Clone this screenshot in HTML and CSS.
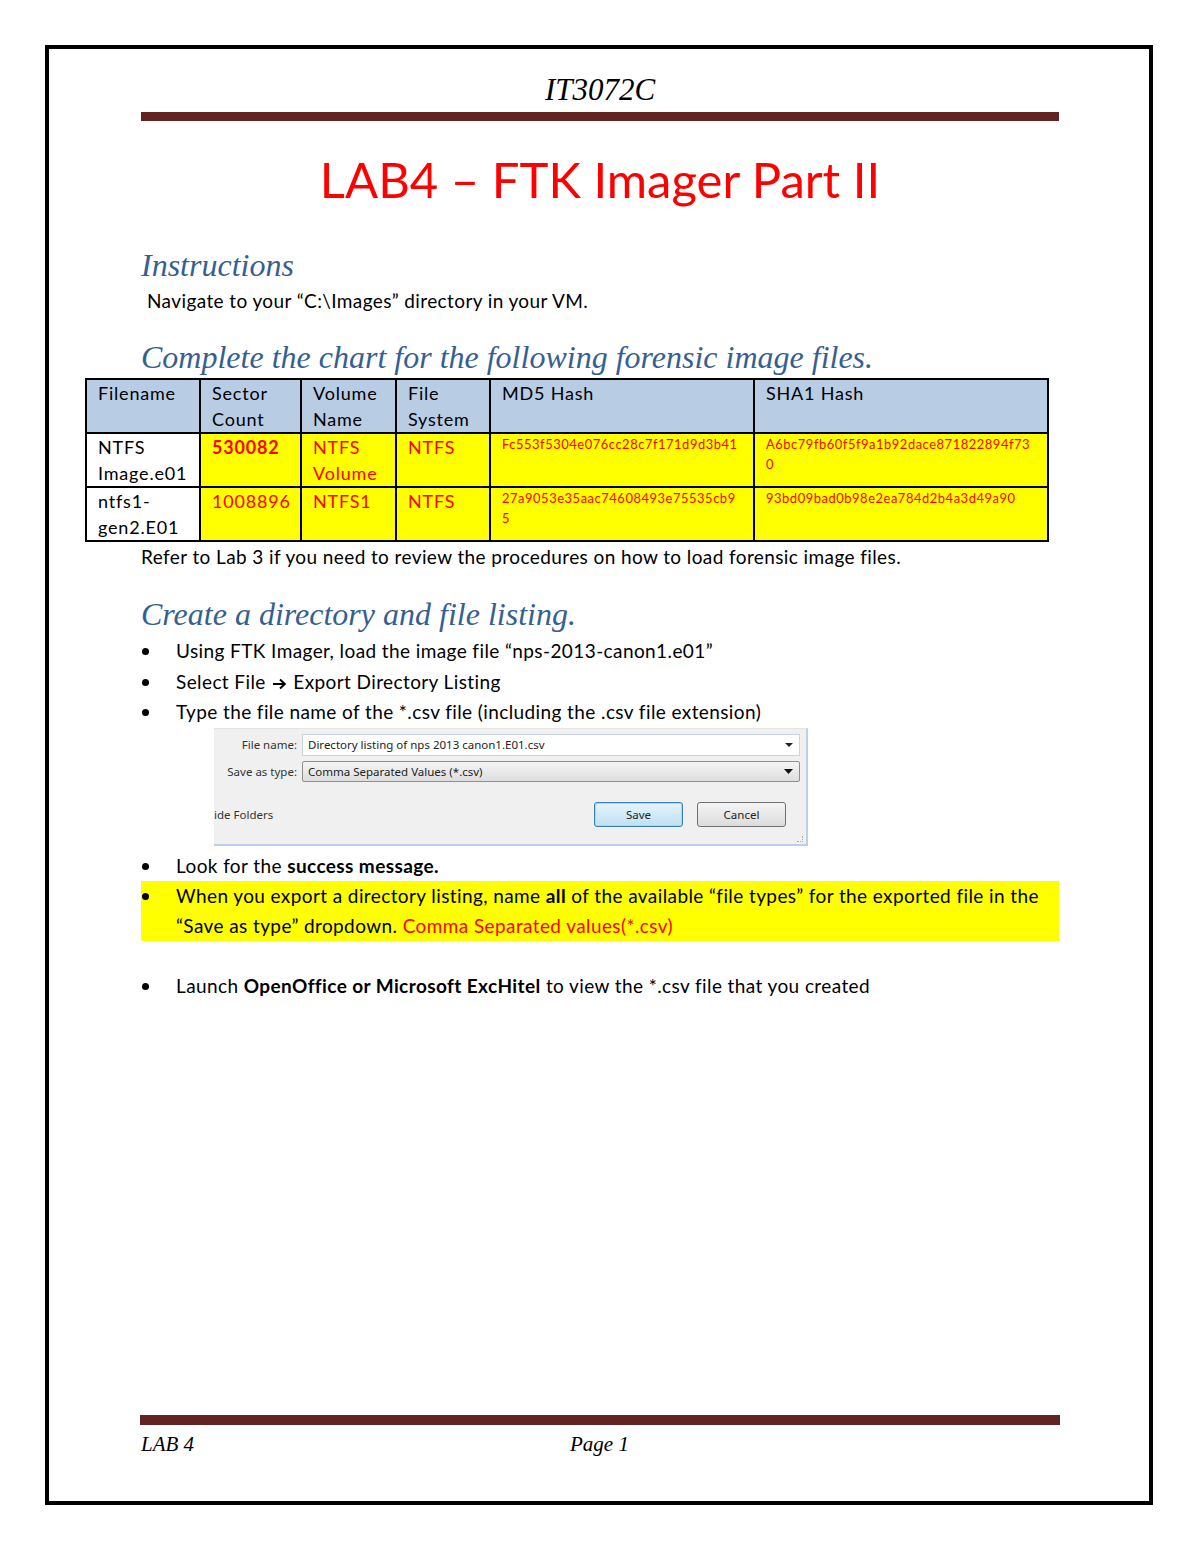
FILE: index.html
```html
<!DOCTYPE html>
<html>
<head>
    <title>LAB4 - FTK Imager Part II</title>
    <meta charset="UTF-8">
    <link rel="stylesheet" href="styles.css">
</head>
<body>
    <div class="page">
        <div class="header">IT3072C</div>
        <div class="rule"></div>
        <h1 class="title">LAB4 – FTK Imager Part II</h1>

        <h2 class="heading instr">Instructions</h2>
        <p class="text nav">Navigate to your “C:\Images” directory in your VM.</p>

        <h2 class="heading chart-title">Complete the chart for the following forensic image files.</h2>
        <table class="chart">
            <colgroup>
                <col style="width:114px">
                <col style="width:101px">
                <col style="width:95px">
                <col style="width:94px">
                <col style="width:264px">
                <col style="width:294px">
            </colgroup>
            <tr class="head">
                <th>Filename</th>
                <th>Sector Count</th>
                <th>Volume Name</th>
                <th>File System</th>
                <th>MD5 Hash</th>
                <th>SHA1 Hash</th>
            </tr>
            <tr>
                <td class="name">NTFS Image.e01</td>
                <td class="answer strong">530082</td>
                <td class="answer">NTFS Volume</td>
                <td class="answer">NTFS</td>
                <td class="hash">Fc553f5304e076cc28c7f171d9d3b41</td>
                <td class="hash">A6bc79fb60f5f9a1b92dace871822894f73<br>0</td>
            </tr>
            <tr>
                <td class="name">ntfs1-<br>gen2.E01</td>
                <td class="answer">1008896</td>
                <td class="answer">NTFS1</td>
                <td class="answer">NTFS</td>
                <td class="hash">27a9053e35aac74608493e75535cb9<br>5</td>
                <td class="hash">93bd09bad0b98e2ea784d2b4a3d49a90</td>
            </tr>
        </table>
        <p class="text refer">Refer to Lab 3 if you need to review the procedures on how to load forensic image files.</p>

        <h2 class="heading create">Create a directory and file listing.</h2>
        <ul class="bullets">
            <li>Using FTK Imager, load the image file “nps-2013-canon1.e01”</li>
            <li>Select File <svg class="arrow" width="15" height="12" viewBox="0 0 15 12"><path d="M1 6h11.5M8 1.5l4.8 4.5L8 10.5" fill="none" stroke="#000" stroke-width="2"/></svg> Export Directory Listing</li>
            <li>Type the file name of the *.csv file (including the .csv file extension)</li>
        </ul>

        <div class="dialog">
            <div class="field">
                <span class="label">File name:</span>
                <div class="input">Directory listing of nps 2013 canon1.E01.csv
                    <svg class="caret" width="8" height="4" viewBox="0 0 8 4"><path d="M0 0h8L4 4z" fill="#222"/></svg>
                </div>
            </div>
            <div class="field">
                <span class="label">Save as type:</span>
                <div class="input select">Comma Separated Values (*.csv)
                    <svg class="caret" width="9" height="5" viewBox="0 0 9 5"><path d="M0 0h9L4.5 5z" fill="#111"/></svg>
                </div>
            </div>
            <div class="actions">
                <span class="folders">ide Folders</span>
                <span class="btn save">Save</span>
                <span class="btn">Cancel</span>
            </div>
            <span class="grip"></span>
        </div>

        <ul class="bullets after">
            <li>Look for the <b class="semi">success message.</b></li>
            <li class="mark">When you export a directory listing, name <b class="semi">all</b> of the available “file types” for the exported file in the “Save as type” dropdown. <span class="red">Comma Separated values(*.csv)</span></li>
        </ul>
        <ul class="bullets last">
            <li>Launch <b>OpenOffice or Microsoft ExcHitel</b> to view the *.csv file that you created</li>
        </ul>

        <div class="footer">
            <div class="rule wide"></div>
            <div class="foot-text">
                <span class="foot-left">LAB 4</span>
                <span>Page 1</span>
            </div>
        </div>
    </div>
</body>
</html>
```

FILE: styles.css
```css
body {
    margin: 0;
    background-color: #fff;
    color: #000;
    font-family: Lato, "Liberation Sans", sans-serif;
}
.page {
    box-sizing: border-box;
    width: 1108px;
    height: 1460px;
    margin: 45px 0 0 45px;
    padding: 21px 90px 42px 92px;
    border: 4px solid #000;
    display: flex;
    flex-direction: column;
}
.header {
    text-align: center;
    font: italic 31px/40px "Liberation Serif", serif;
}
.rule {
    height: 9px;
    margin-top: 2px;
    background-color: #622423;
}
.title {
    margin: 26px 0 0;
    text-align: center;
    font-weight: 400;
    font-size: 49px;
    line-height: 64px;
    color: #ff0000;
}
.heading {
    margin: 0;
    font: italic 400 32px/40px "Liberation Serif", serif;
    color: #365f91;
}
.text {
    margin: 0;
    font-size: 19px;
    line-height: 30px;
    letter-spacing: 0.4px;
}
.instr {
    margin-top: 34px;
}
.nav {
    margin-top: 1px;
    padding-left: 6px;
}
.chart-title {
    margin-top: 21px;
}

/* chart */
.chart {
    width: 962px;
    margin: 1px 0 0 -56px;
    border-collapse: collapse;
    table-layout: fixed;
    font-size: 18px;
}
.chart th,
.chart td {
    height: 52px;
    padding: 0 10px 0 11px;
    border: 2px solid #000;
    vertical-align: top;
    text-align: left;
    font-weight: 400;
    line-height: 26px;
    letter-spacing: 0.8px;
}
.chart th {
    background-color: #b8cce4;
}
.chart td {
    background-color: #ffff00;
}
.chart td.name {
    background-color: #fff;
}
.chart td.answer {
    color: #ff0000;
    letter-spacing: 0.8px;
}
.chart td.strong {
    font-weight: 700;
}
.chart td.hash {
    color: #ff0000;
    font-size: 13px;
    line-height: 20px;
    letter-spacing: 0.5px;
}
.refer {
    margin-top: 0;
}
.create {
    margin-top: 22px;
}

/* bullet lists */
.bullets {
    margin: 2px 0 0;
    padding: 0;
    list-style: none;
    font-size: 19px;
    line-height: 30.5px;
    letter-spacing: 0.4px;
}
.bullets li {
    position: relative;
    padding-left: 35px;
}
.bullets li::before {
    content: "";
    position: absolute;
    left: 1px;
    top: 12px;
    width: 7px;
    height: 7px;
    border-radius: 50%;
    background-color: #000;
}
.arrow {
    vertical-align: -1px;
    margin: 0 1px;
}
.semi {
    font-weight: 700;
}
.bullets.after {
    margin-top: 5px;
    line-height: 30px;
}
.bullets .mark {
    background-color: #ffff00;
}
.red {
    color: #ff0000;
}
.bullets.last {
    margin-top: 30px;
}

/* save dialog snapshot */
.dialog {
    position: relative;
    box-sizing: border-box;
    width: 594px;
    height: 118px;
    margin-left: 73px;
    padding-top: 5px;
    background-color: #f0f0f0;
    border-top: 1px solid #e4e4e4;
    border-right: 2px solid #b9d1ea;
    border-bottom: 2px solid #b9d1ea;
    font-family: "Noto Sans", sans-serif;
    font-size: 11.5px;
    color: #222;
}
.field {
    display: flex;
    align-items: center;
    height: 22px;
    margin-bottom: 5px;
}
.label {
    width: 83px;
    text-align: right;
    color: #333;
}
.input {
    box-sizing: border-box;
    display: flex;
    align-items: center;
    justify-content: space-between;
    width: 498px;
    height: 22px;
    margin-left: 5px;
    padding: 0 6px 0 5px;
    background-color: #fff;
    border: 1px solid #c9d4e2;
}
.select {
    height: 21px;
    background: linear-gradient(#f5f5f5, #dedede);
    border: 1px solid #8e8f8f;
    border-radius: 2px;
}
.actions {
    display: flex;
    align-items: center;
    margin-top: 19px;
}
.folders {
    width: 380px;
    color: #333;
}
.btn {
    box-sizing: border-box;
    width: 89px;
    height: 25px;
    line-height: 23px;
    margin-right: 14px;
    text-align: center;
    background: linear-gradient(#f4f4f4, #dcdcdc);
    border: 1px solid #707070;
    border-radius: 3px;
}
.btn.save {
    background: linear-gradient(#e6f3fb, #bfe0f4);
    border-color: #3c7fb1;
    box-shadow: inset 0 0 0 1px #a6d7f3;
}
.grip {
    position: absolute;
    right: 3px;
    bottom: 2px;
    width: 5px;
    height: 5px;
    border-right: 1px dotted #aaa;
    border-bottom: 1px dotted #aaa;
}

/* footer */
.footer {
    margin-top: auto;
}
.rule.wide {
    height: 10px;
    width: 920px;
    margin: 0 0 0 -1px;
}
.foot-text {
    display: flex;
    margin-top: 4px;
    font: italic 21px/30px "Liberation Serif", serif;
}
.foot-left {
    width: 429px;
}
```
